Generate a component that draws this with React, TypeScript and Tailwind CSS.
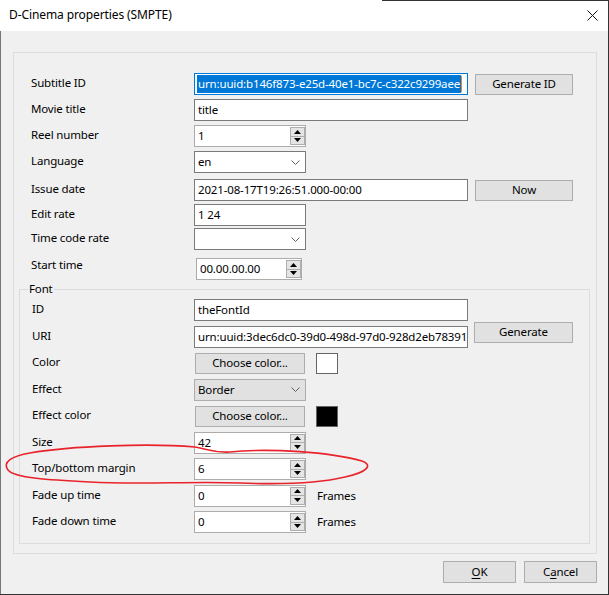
import React from "react";

const font =
  "font-['Segoe_UI','Noto_Sans',sans-serif] text-[11.5px] tracking-[-0.15px] leading-none text-black";

const Arrow = ({ up }: { up?: boolean }) => (
  <svg width="7" height="4" viewBox="0 0 7 4">
    {up ? <polygon points="0,4 7,4 3.5,0" fill="#000" /> : <polygon points="0,0 7,0 3.5,4" fill="#000" />}
  </svg>
);

const Chevron = () => (
  <svg width="9" height="5" viewBox="0 0 9 5">
    <polyline points="0.5,0.5 4.5,4.5 8.5,0.5" fill="none" stroke="#606060" strokeWidth="1" />
  </svg>
);

const TextField = ({ value, wide, selected }: { value: string; wide?: boolean; selected?: boolean }) => (
  <div
    className={`h-[22px] flex items-center bg-white border ${selected ? "border-[#0078d7]" : "border-[#7a7a7a]"} ${
      wide ? "w-[274px]" : "w-[112px]"
    } pl-[2px] overflow-hidden whitespace-nowrap`}
  >
    {selected ? (
      <>
        <span className="bg-[#0078d7] text-white h-[18px] flex items-center px-[1px]">{value}</span>
        <span className="w-[1px] h-[16px] bg-[#f08020]" />
      </>
    ) : (
      <span className="pl-[1px]">{value}</span>
    )}
  </div>
);

const SpinBox = ({ value, className = "w-[112px]" }: { value: string; className?: string }) => (
  <div className={`h-[22px] flex bg-white border border-[#acacac] ${className}`}>
    <span className="flex-1 flex items-center pl-[3px]">{value}</span>
    <div className="flex flex-col py-[1px] w-[15px]">
      <div className="flex-1 flex items-center justify-center bg-[#e5e5e5] border border-[#adadad]">
        <Arrow up />
      </div>
      <div className="flex-1 flex items-center justify-center bg-[#e5e5e5] border border-[#adadad] border-t-0">
        <Arrow />
      </div>
    </div>
  </div>
);

const Combo = ({ value, readOnly }: { value: string; readOnly?: boolean }) => (
  <div
    className={`h-[22px] w-[112px] flex items-center justify-between pl-[3px] pr-[5px] border ${
      readOnly ? "bg-[#e1e1e1] border-[#adadad]" : "bg-white border-[#7a7a7a]"
    }`}
  >
    <span>{value}</span>
    <Chevron />
  </div>
);

const Button = ({ children, className = "" }: { children: React.ReactNode; className?: string }) => (
  <div className={`h-[21px] flex items-center justify-center bg-[#e1e1e1] border border-[#adadad] ${className}`}>
    {children}
  </div>
);

const Row = ({
  label,
  labelW,
  children,
  className = "",
  labelClass = "-mt-[2px]",
}: {
  label: string;
  labelW: string;
  children: React.ReactNode;
  className?: string;
  labelClass?: string;
}) => (
  <div className={`h-[22px] flex items-center ${className}`}>
    <span className={`${labelW} shrink-0 ${labelClass}`}>{label}</span>
    {children}
  </div>
);

export default function App() {
  const outerL = "w-[163px]";
  const innerL = "w-[162px]";
  return (
    <div className={`relative w-[609px] h-[595px] bg-[#f0f0f0] border-r border-b border-[#333] ${font}`}>
      <div className="absolute top-0 left-[382px] right-0 h-[1px] bg-[#333]" />
      <div className="h-[31px] bg-white flex items-center justify-between pl-[9px] pr-[10px]">
        <span className="-mt-[1px] text-[12px] tracking-[-0.1px]">D-Cinema properties (SMPTE)</span>
        <svg width="11" height="11" viewBox="0 0 11 11">
          <path d="M0.5 0.5 L10.5 10.5 M10.5 0.5 L0.5 10.5" stroke="#111" strokeWidth="1" />
        </svg>
      </div>
      <div className="h-[563px] border-l border-[#777] pt-[21px] pl-[12px]">
        <div className="w-[584px] h-[502px] border border-[#dcdcdc] pt-[20px]">
          <div className="flex flex-col gap-[4px] pl-[17px]">
            <Row label="Subtitle ID" labelW={outerL}>
              <TextField value="urn:uuid:b146f873-e25d-40e1-bc7c-c322c9299aee" wide selected />
              <Button className="ml-[7px] w-[98px]">Generate ID</Button>
            </Row>
            <Row label="Movie title" labelW={outerL}>
              <TextField value="title" wide />
            </Row>
            <Row label="Reel number" labelW={outerL}>
              <SpinBox value="1" />
            </Row>
            <Row label="Language" labelW={outerL}>
              <Combo value="en" />
            </Row>
            <Row label="Issue date" labelW={outerL} className="mt-[2px]">
              <TextField value="2021-08-17T19:26:51.000-00:00" wide />
              <Button className="ml-[7px] w-[98px]">Now</Button>
            </Row>
            <Row label="Edit rate" labelW={outerL} className="-mt-[1px]">
              <TextField value="1 24" />
            </Row>
            <Row label="Time code rate" labelW={outerL} className="-mt-[2px]">
              <Combo value="" />
            </Row>
            <Row label="Start time" labelW={outerL} className="mt-[4px]" labelClass="-mt-[9px]">
              <SpinBox value="00.00.00.00" className="w-[106px] ml-[2px]" />
            </Row>
          </div>

          <div className="relative ml-[5px] mt-[9px] w-[571px] h-[255px] border border-[#dcdcdc] pt-[9px] pl-[12px]">
            <span className="absolute -top-[7px] left-[8px] px-[1px] bg-[#f0f0f0]">Font</span>
            <div className="flex flex-col gap-[4.5px]">
              <Row label="ID" labelW={innerL}>
                <TextField value="theFontId" wide />
              </Row>
              <Row label="URI" labelW={innerL}>
                <TextField value="urn:uuid:3dec6dc0-39d0-498d-97d0-928d2eb78391" wide />
                <Button className="ml-[6px] w-[99px] -mt-[9px]">Generate</Button>
              </Row>
              <Row label="Color" labelW={innerL}>
                <Button className="ml-[1px] w-[110px] h-[20px]">Choose color...</Button>
                <div className="ml-[11px] w-[22px] h-[21px] bg-white border border-[#646464]" />
              </Row>
              <Row label="Effect" labelW={innerL}>
                <Combo value="Border" readOnly />
              </Row>
              <Row label="Effect color" labelW={innerL}>
                <Button className="ml-[1px] w-[110px] h-[20px]">Choose color...</Button>
                <div className="ml-[11px] w-[22px] h-[21px] bg-black border border-[#646464]" />
              </Row>
              <Row label="Size" labelW={innerL}>
                <SpinBox value="42" />
              </Row>
              <Row label="Top/bottom margin" labelW={innerL}>
                <SpinBox value="6" />
              </Row>
              <Row label="Fade up time" labelW={innerL}>
                <SpinBox value="0" />
                <span className="ml-[11px]">Frames</span>
              </Row>
              <Row label="Fade down time" labelW={innerL}>
                <SpinBox value="0" />
                <span className="ml-[11px]">Frames</span>
              </Row>
            </div>
          </div>
        </div>

        <div className="w-[584px] mt-[7px] flex justify-end gap-[8px]">
          <Button className="w-[73px] h-[22px]">
            <span className="underline underline-offset-2">O</span>K
          </Button>
          <Button className="w-[73px] h-[22px]">
            C<span className="underline underline-offset-2">a</span>ncel
          </Button>
        </div>
      </div>

      <svg className="absolute left-0 top-0 pointer-events-none" width="609" height="595">
        <path
          d="M 8 470 C 2 462, 12 456, 30 453 C 70 446, 150 443, 195 447 C 208 449, 214 453, 230 452 C 270 448, 330 452, 362 461 C 373 465, 368 472, 345 477 C 320 483, 290 485, 240 483 C 190 481, 140 485, 90 482 C 50 480, 14 478, 8 470 Z"
          fill="none"
          stroke="#e8232b"
          strokeWidth="1.6"
        />
      </svg>
    </div>
  );
}
